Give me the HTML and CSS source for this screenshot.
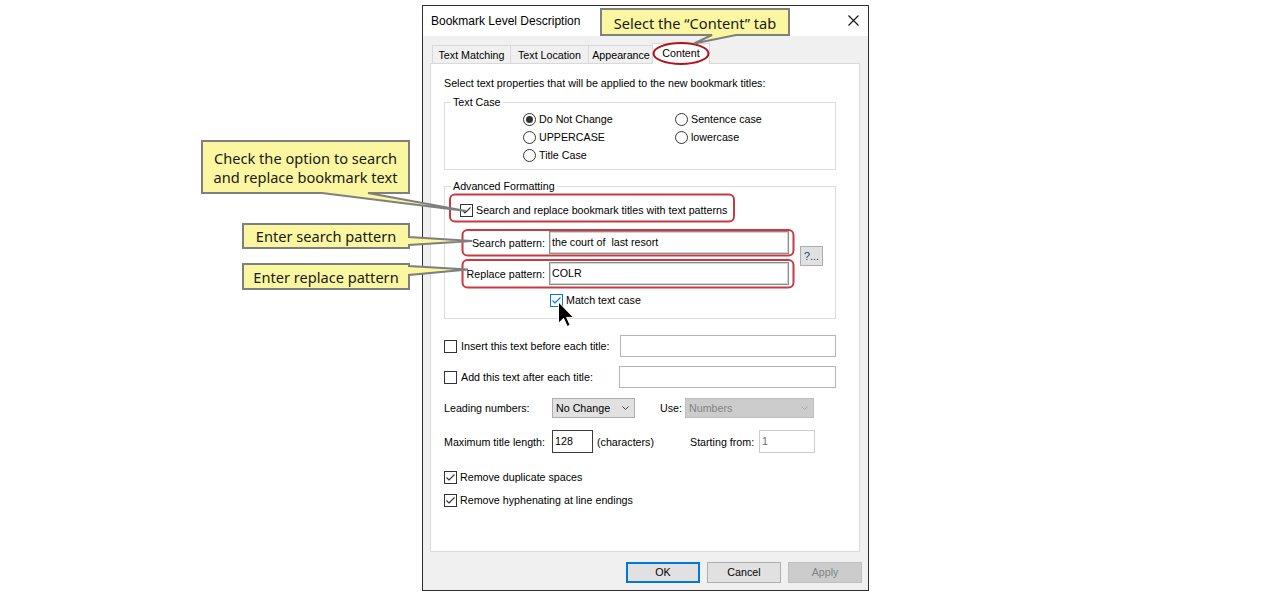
FILE: index.html
```html
<!DOCTYPE html>
<html lang="en">
<head>
    <meta charset="UTF-8">
    <meta name="viewport" content="width=device-width, initial-scale=1.0">
    <title>Bookmark Level Description</title>
    <link rel="stylesheet" href="styles.css">
</head>
<body>
<div class="stage">
    <div class="dialog">
        <div class="titlebar">
            <span class="title">Bookmark Level Description</span>
            <svg class="close" width="11" height="11" viewBox="0 0 11 11"><path d="M0.5 0.5L10.5 10.5M10.5 0.5L0.5 10.5" stroke="#111" stroke-width="1.1"/></svg>
        </div>
        <div class="body">
            <div class="tabs">
                <div class="tab t1">Text Matching</div>
                <div class="tab t2">Text Location</div>
                <div class="tab t3">Appearance</div>
                <div class="tab t4 active">Content</div>
            </div>
            <div class="panel">
                <p class="intro">Select text properties that will be applied to the new bookmark titles:</p>

                <fieldset class="group case">
                    <legend>Text Case</legend>
                    <div class="radios">
                        <div class="opt"><span class="radio on"></span>Do Not Change</div>
                        <div class="opt"><span class="radio"></span>Sentence case</div>
                        <div class="opt"><span class="radio"></span>UPPERCASE</div>
                        <div class="opt"><span class="radio"></span>lowercase</div>
                        <div class="opt"><span class="radio"></span>Title Case</div>
                    </div>
                </fieldset>

                <fieldset class="group adv">
                    <legend>Advanced Formatting</legend>
                    <div class="adv-inner">
                        <div class="chk-row toggle">
                            <span class="cb"><svg width="11" height="11" viewBox="0 0 11 11"><path d="M1.5 5.5L4 8L9.5 2.5" fill="none" stroke="#333" stroke-width="1.1"/></svg></span>
                            <span>Search and replace bookmark titles with text patterns</span>
                        </div>
                        <div class="patterns">
                            <span class="plabel">Search pattern:</span>
                            <span class="field pat">the court of&nbsp; last resort</span>
                            <span class="btn help">?...</span>
                            <span class="plabel">Replace pattern:</span>
                            <span class="field pat">COLR</span>
                        </div>
                        <div class="chk-row match">
                            <span class="cb hot"><svg width="11" height="11" viewBox="0 0 11 11"><path d="M1.5 5.5L4 8L9.5 2.5" fill="none" stroke="#0078d7" stroke-width="1.1"/></svg></span>
                            <span>Match text case</span>
                        </div>
                    </div>
                </fieldset>

                <div class="row insert">
                    <span class="cb"></span>
                    <span class="cb-label">Insert this text before each title:</span>
                    <span class="field before"></span>
                </div>
                <div class="row append">
                    <span class="cb"></span>
                    <span class="cb-label">Add this text after each title:</span>
                    <span class="field after"></span>
                </div>
                <div class="row leading">
                    <span class="lbl">Leading numbers:</span>
                    <span class="select change">No Change
                        <svg width="7" height="4" viewBox="0 0 7 4"><path d="M0.5 0.5L3.5 3.5L6.5 0.5" fill="none" stroke="#444"/></svg>
                    </span>
                    <span class="use">Use:</span>
                    <span class="select numbers disabled">Numbers
                        <svg width="7" height="4" viewBox="0 0 7 4"><path d="M0.5 0.5L3.5 3.5L6.5 0.5" fill="none" stroke="#a6a6a6"/></svg>
                    </span>
                </div>
                <div class="row maxlen">
                    <span class="lbl">Maximum title length:</span>
                    <span class="field len">128</span>
                    <span class="unit">(characters)</span>
                    <span class="start">Starting from:</span>
                    <span class="field from">1</span>
                </div>
                <div class="chk-row plain first">
                    <span class="cb"><svg width="11" height="11" viewBox="0 0 11 11"><path d="M1.5 5.5L4 8L9.5 2.5" fill="none" stroke="#333" stroke-width="1.1"/></svg></span>
                    <span>Remove duplicate spaces</span>
                </div>
                <div class="chk-row plain">
                    <span class="cb"><svg width="11" height="11" viewBox="0 0 11 11"><path d="M1.5 5.5L4 8L9.5 2.5" fill="none" stroke="#333" stroke-width="1.1"/></svg></span>
                    <span>Remove hyphenating at line endings</span>
                </div>
            </div>
            <div class="buttons">
                <span class="btn default">OK</span>
                <span class="btn">Cancel</span>
                <span class="btn disabled">Apply</span>
            </div>
        </div>
    </div>

    <!-- callouts drawn over the dialog -->
    <svg class="overlay" width="1280" height="594" viewBox="0 0 1280 594">
        <g class="marks">
            <ellipse cx="681" cy="53.5" rx="27.5" ry="10.5"/>
        </g>
        <g class="boxes">
            <rect x="450" y="194.5" width="284" height="27" rx="5"/>
            <rect x="462.5" y="230" width="331" height="25.5" rx="5"/>
            <rect x="462.5" y="260" width="331" height="27.5" rx="5"/>
        </g>
        <g class="callouts">
            <path d="M601 9H789V35H736L694 43.5L712 35H601Z"/>
            <path d="M202 141H409V193H368L466 211L322 193H202Z"/>
            <path d="M243 224H409V237L472 241L409 245V248H243Z"/>
            <path d="M243 264H409V266L468 269.5L409 275V289H243Z"/>
        </g>
        <g class="callout-text">
            <text x="695" y="28.5">Select the “Content” tab</text>
            <text x="305.5" y="164">Check the option to search</text>
            <text x="305.5" y="183">and replace bookmark text</text>
            <text x="326" y="242">Enter search pattern</text>
            <text x="326" y="282.5">Enter replace pattern</text>
        </g>
        <path class="cursor" transform="translate(558.5 302) scale(1.25)" d="M0 0V17L4 13L7 19.5L9.3 18.5L6.5 12.3H12Z"/>
    </svg>
</div>
</body>
</html>
```

FILE: styles.css
```css
body {
    margin: 0;
    background-color: #fff;
    font-family: "Liberation Sans", Arial, sans-serif;
    font-size: 10.7px;
    color: #000;
}
.stage {
    position: relative;
    width: 1280px;
    height: 594px;
    padding: 5px 0 0 422px;
    box-sizing: border-box;
    overflow: hidden;
}
.dialog {
    width: 447px;
    height: 586px;
    box-sizing: border-box;
    border: 1px solid #2e2e2e;
    background-color: #f0f0f0;
    display: flex;
    flex-direction: column;
}
.titlebar {
    height: 30px;
    background-color: #fff;
    display: flex;
    align-items: center;
    justify-content: space-between;
    padding: 0 9px 0 8px;
}
.title {
    font-size: 12px;
}
.close {
    margin-top: -1px;
}
.body {
    flex: 1;
    padding: 7px 8px 0 7px;
}
.tabs {
    display: flex;
    align-items: flex-end;
    height: 20px;
    padding-left: 2px;
}
.tab {
    height: 18px;
    box-sizing: border-box;
    border: 1px solid #d9d9d9;
    border-bottom: none;
    background-color: #f0f0f0;
    text-align: center;
    line-height: 18px;
    margin-left: -1px;
}
.t1 { width: 79px; margin-left: 0; }
.t2 { width: 79px; }
.t3 { width: 66px; }
.tab.active {
    position: relative;
    width: 58px;
    height: 21px;
    margin-left: -2px;
    margin-bottom: -1px;
    background-color: #fff;
    line-height: 19px;
}
.panel {
    height: 489px;
    box-sizing: border-box;
    border: 1px solid #d9d9d9;
    background-color: #fff;
    padding: 13px 23px 0 13px;
}
.intro {
    margin: 0;
    line-height: 13px;
}
.group {
    margin: 6px 0 0;
    padding: 0;
    border: 1px solid #dcdcdc;
    min-width: 0;
}
.group legend {
    margin-left: 6px;
    padding: 0 2px;
    line-height: 13px;
}
.adv {
    margin-top: 10px;
}
.radios {
    display: grid;
    grid-template-columns: 152px auto;
    grid-auto-rows: 18px;
    padding: 1px 0 5px 78px;
}
.opt {
    display: flex;
    align-items: center;
    gap: 3px;
}
.radio {
    position: relative;
    width: 13px;
    height: 13px;
    box-sizing: border-box;
    border: 1px solid #333;
    border-radius: 50%;
    background-color: #fff;
    flex: none;
}
.radio.on::after {
    content: "";
    position: absolute;
    left: 2px;
    top: 2px;
    width: 7px;
    height: 7px;
    border-radius: 50%;
    background-color: #333;
}
.adv-inner {
    padding: 8px 0 9px;
}
.chk-row {
    display: flex;
    align-items: center;
    gap: 3px;
    height: 18px;
}
.toggle {
    padding-left: 15px;
}
.match {
    margin-top: 6px;
    padding-left: 105px;
}
.cb {
    width: 13px;
    height: 13px;
    box-sizing: border-box;
    border: 1px solid #333;
    background-color: #fff;
    flex: none;
    display: flex;
    align-items: center;
    justify-content: center;
}
.cb svg {
    display: block;
}
.cb.hot {
    border-color: #0078d7;
}
.patterns {
    display: grid;
    grid-template-columns: 99px 240px auto;
    grid-template-rows: 23px 23px;
    row-gap: 8px;
    column-gap: 4px;
    margin-top: 12px;
    padding-left: 1px;
}
.plabel {
    align-self: center;
    text-align: right;
}
.field {
    box-sizing: border-box;
    border: 1px solid #7a7a7a;
    background-color: #fff;
    padding: 0 2px;
    white-space: pre;
}
.pat {
    line-height: 21px;
    border-color: #8c8c8c;
    box-shadow: inset 0 0 0 1px #d4d4d4;
}
.btn {
    box-sizing: border-box;
    height: 21px;
    width: 74px;
    border: 1px solid #adadad;
    background-color: #e1e1e1;
    text-align: center;
    line-height: 19px;
}
.help {
    grid-column: 3;
    grid-row: 1 / span 2;
    align-self: start;
    width: 23px;
    height: 20px;
    line-height: 18px;
    margin: 15px 0 0 7px;
    color: #1e395b;
}
.row {
    display: flex;
    align-items: center;
}
.cb-label {
    margin-left: 4px;
}
.insert {
    margin-top: 16px;
    height: 22px;
}
.append {
    margin-top: 9px;
    height: 22px;
}
.before,
.after {
    margin-left: auto;
    height: 22px;
    border-color: #b4b4b4;
}
.before { width: 216px; }
.after { width: 217px; }
.lbl {
    width: 108px;
    flex: none;
}
.leading {
    margin-top: 10px;
    height: 20px;
}
.select {
    box-sizing: border-box;
    height: 20px;
    border: 1px solid #adadad;
    background-color: #e1e1e1;
    display: flex;
    align-items: center;
    justify-content: space-between;
    padding: 0 5px 0 3px;
}
.change { width: 83px; }
.use {
    width: 25px;
    margin-left: 25px;
}
.numbers { width: 129px; }
.select.disabled {
    background-color: #cccccc;
    border-color: #bfbfbf;
    color: #838383;
}
.maxlen {
    margin-top: 12px;
    height: 23px;
}
.maxlen .field {
    height: 23px;
    line-height: 20px;
}
.len {
    width: 41px;
    border-color: #3c3c3c;
}
.unit {
    width: 93px;
    margin-left: 4px;
}
.start {
    width: 69px;
}
.from {
    width: 56px;
    border-color: #cccccc;
    color: #6d6d6d;
}
.plain {
    gap: 3px;
}
.plain.first {
    margin-top: 15px;
}
.plain + .plain {
    margin-top: 5px;
}
.buttons {
    display: flex;
    justify-content: flex-end;
    gap: 7px;
    margin: 10px -2px 0 0;
}
.btn.default {
    border: 2px solid #0078d7;
    line-height: 17px;
}
.btn.disabled {
    background-color: #cccccc;
    border-color: #bfbfbf;
    color: #838383;
}
.overlay {
    position: absolute;
    left: 0;
    top: 0;
    pointer-events: none;
}
.marks ellipse {
    fill: none;
    stroke: #b3121e;
    stroke-width: 2;
}
.boxes rect {
    fill: none;
    stroke: #c63a42;
    stroke-width: 2;
}
.callouts path {
    fill: #faf7a0;
    stroke: #7f7f7f;
    stroke-width: 2;
}
.callout-text text {
    font-family: "Noto Sans", "Open Sans", sans-serif;
    font-size: 14.6px;
    fill: #1a1a1a;
    text-anchor: middle;
}
.cursor {
    fill: #000;
    stroke: #fff;
    stroke-width: 0.8;
}
```
